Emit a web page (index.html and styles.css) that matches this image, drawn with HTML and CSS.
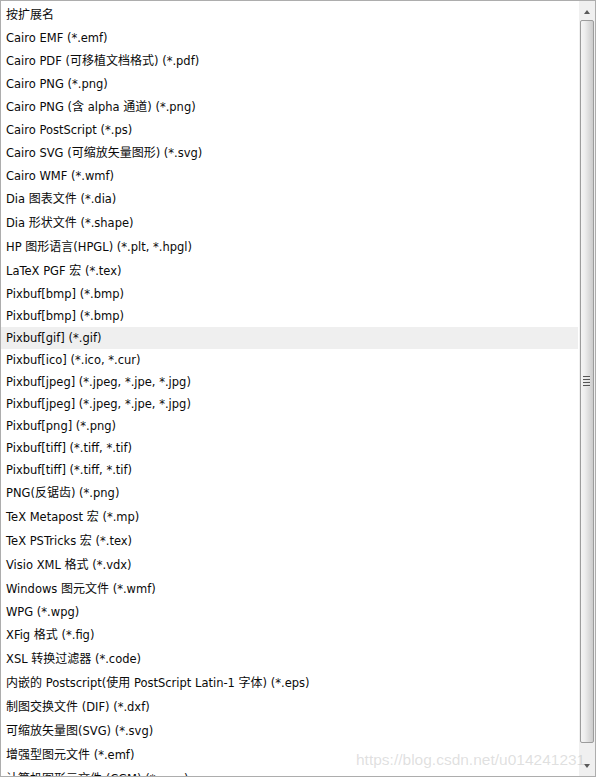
FILE: index.html
```html
<!DOCTYPE html>
<html lang="zh-CN">
<head>
<meta charset="utf-8">
<title>按扩展名</title>
<link rel="stylesheet" href="styles.css">
</head>
<body>
<div class="box">
  <div class="list">
    <div class="row cjk"><span class="zh">按扩展名</span></div>
    <div class="row">Cairo EMF (*.emf)</div>
    <div class="row cjk">Cairo PDF (<span class="zh">可移植文档格式</span>) (*.pdf)</div>
    <div class="row">Cairo PNG (*.png)</div>
    <div class="row cjk">Cairo PNG (<span class="zh">含</span> alpha <span class="zh">通道</span>) (*.png)</div>
    <div class="row">Cairo PostScript (*.ps)</div>
    <div class="row cjk">Cairo SVG (<span class="zh">可缩放矢量图形</span>) (*.svg)</div>
    <div class="row">Cairo WMF (*.wmf)</div>
    <div class="row cjk">Dia <span class="zh">图表文件</span> (*.dia)</div>
    <div class="row cjk">Dia <span class="zh">形状文件</span> (*.shape)</div>
    <div class="row cjk">HP <span class="zh">图形语言</span>(HPGL) (*.plt, *.hpgl)</div>
    <div class="row cjk">LaTeX PGF <span class="zh">宏</span> (*.tex)</div>
    <div class="row">Pixbuf[bmp] (*.bmp)</div>
    <div class="row">Pixbuf[bmp] (*.bmp)</div>
    <div class="row sel">Pixbuf[gif] (*.gif)</div>
    <div class="row">Pixbuf[ico] (*.ico, *.cur)</div>
    <div class="row">Pixbuf[jpeg] (*.jpeg, *.jpe, *.jpg)</div>
    <div class="row">Pixbuf[jpeg] (*.jpeg, *.jpe, *.jpg)</div>
    <div class="row">Pixbuf[png] (*.png)</div>
    <div class="row">Pixbuf[tiff] (*.tiff, *.tif)</div>
    <div class="row">Pixbuf[tiff] (*.tiff, *.tif)</div>
    <div class="row cjk">PNG(<span class="zh">反锯齿</span>) (*.png)</div>
    <div class="row cjk">TeX Metapost <span class="zh">宏</span> (*.mp)</div>
    <div class="row cjk">TeX PSTricks <span class="zh">宏</span> (*.tex)</div>
    <div class="row cjk">Visio XML <span class="zh">格式</span> (*.vdx)</div>
    <div class="row cjk">Windows <span class="zh">图元文件</span> (*.wmf)</div>
    <div class="row">WPG (*.wpg)</div>
    <div class="row cjk">XFig <span class="zh">格式</span> (*.fig)</div>
    <div class="row cjk">XSL <span class="zh">转换过滤器</span> (*.code)</div>
    <div class="row cjk"><span class="zh">内嵌的</span> Postscript(<span class="zh">使用</span> PostScript Latin-1 <span class="zh">字体</span>) (*.eps)</div>
    <div class="row cjk"><span class="zh">制图交换文件</span> (DIF) (*.dxf)</div>
    <div class="row cjk"><span class="zh">可缩放矢量图</span>(SVG) (*.svg)</div>
    <div class="row cjk"><span class="zh">增强型图元文件</span> (*.emf)</div>
    <div class="row cjk"><span class="zh">计算机图形元文件</span> (CGM) (*.cgm)</div>
  </div>
  <div class="scroll">
    <div class="btn up"><span class="tri-up"></span></div>
    <div class="thumb">
      <div class="grip"><i></i><i></i><i></i><i></i></div>
    </div>
    <div class="btn down"><span class="tri-down"></span></div>
  </div>
  <div class="watermark">https://blog.csdn.net/u014241231</div>
</div>
</body>
</html>
```

FILE: styles.css
```css
html, body {
  margin: 0;
  padding: 0;
  background: #fff;
}
body {
  font-family: "DejaVu Sans", "Noto Sans CJK SC", sans-serif;
  font-size: 11.5px;
  color: #0a0a0a;
}
.zh {
  font-family: "Noto Sans CJK SC", sans-serif;
  font-size: 12px;
  line-height: 1;
}
.box {
  position: relative;
  width: 596px;
  height: 777px;
  box-sizing: border-box;
  border: 1px solid #adadad;
  display: flex;
  overflow: hidden;
}
.list {
  flex: 1;
  padding-top: 2px;
  overflow: hidden;
}
.row {
  height: 22px;
  line-height: 22px;
  padding-left: 5px;
  white-space: nowrap;
}
.row.cjk {
  height: 24px;
  line-height: 24px;
}
.row.sel {
  background: #efefef;
  margin-right: 1px;
}
.scroll {
  width: 16px;
  background: #f0f0f0;
  display: flex;
  flex-direction: column;
}
.btn {
  display: flex;
  align-items: center;
  justify-content: center;
}
.btn.up {
  height: 19px;
}
.btn.down {
  flex: 1;
  align-items: flex-end;
  padding-bottom: 8px;
}
.tri-up {
  width: 0;
  height: 0;
  border-left: 3.5px solid transparent;
  border-right: 3.5px solid transparent;
  border-bottom: 4px solid #5a5a5a;
  margin-top: 2px;
}
.tri-down {
  width: 0;
  height: 0;
  border-left: 3.5px solid transparent;
  border-right: 3.5px solid transparent;
  border-top: 4px solid #5a5a5a;
}
.thumb {
  height: 723px;
  width: 14px;
  box-sizing: border-box;
  margin-left: 1px;
  border: 1px solid #9c9c9c;
  border-radius: 2px;
  background: linear-gradient(to right, #f4f4f4 0%, #eeeeee 30%, #dadada 70%, #cccccc 100%);
  display: flex;
  align-items: center;
  justify-content: center;
}
.grip {
  display: flex;
  flex-direction: column;
  gap: 1px;
  margin-left: -1px;
}
.grip i {
  display: block;
  width: 7px;
  height: 1px;
  background: #555;
  border-bottom: 1px solid #e8e8e8;
}
.watermark {
  position: absolute;
  left: 355px;
  top: 751px;
  font-family: "Liberation Sans", sans-serif;
  font-size: 15.5px;
  line-height: 1;
  color: rgba(180, 180, 180, 0.42);
  white-space: nowrap;
  pointer-events: none;
}
```
